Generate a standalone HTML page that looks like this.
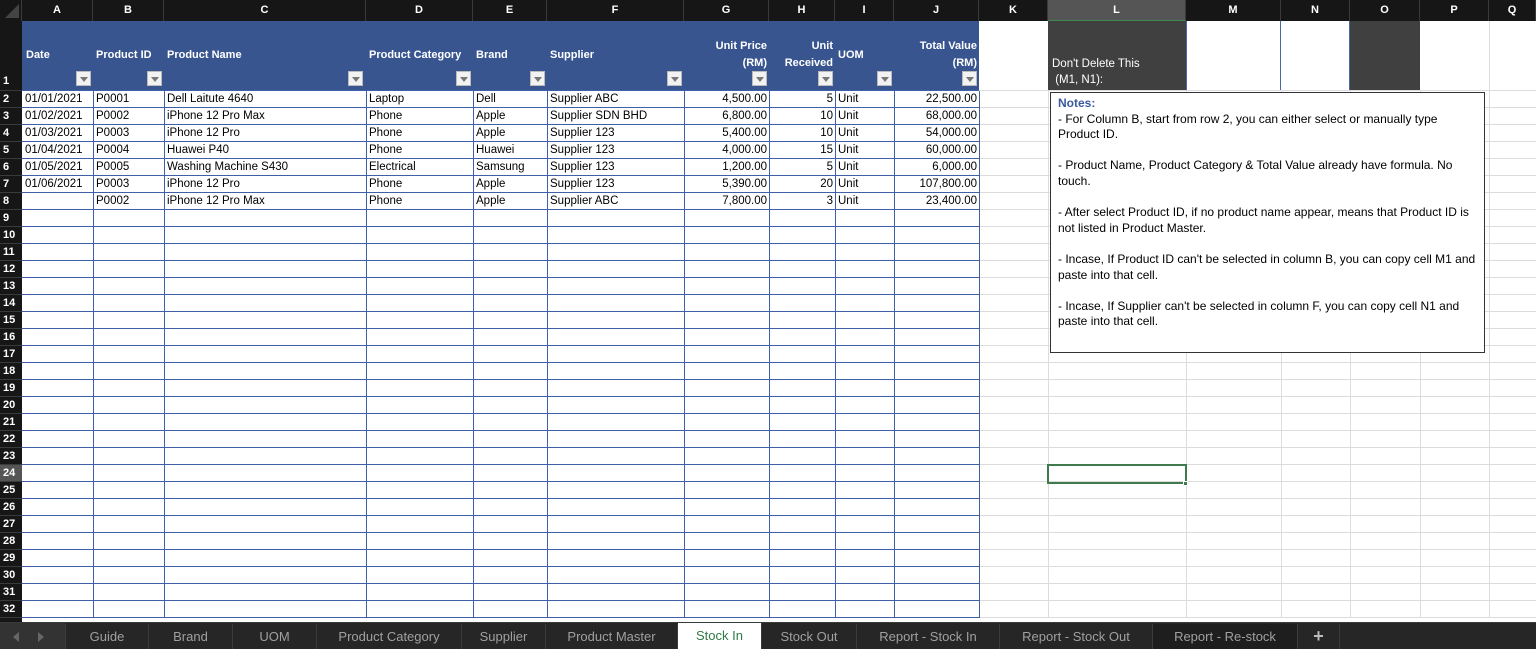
<!DOCTYPE html>
<html><head><meta charset="utf-8"><style>
*{margin:0;padding:0;box-sizing:border-box}
body{width:1536px;height:649px;overflow:hidden;background:#fff;font-family:"Liberation Sans",sans-serif;position:relative}
.a{position:absolute}
.ch{position:absolute;top:0;height:21px;background:#161616;color:#fff;font-weight:bold;font-size:11px;line-height:21px;text-align:center;border-right:1px solid #3a3a3a}
.rh{position:absolute;left:0;width:22px;height:17px;background:#161616;color:#fff;font-weight:bold;font-size:11px;line-height:17px;padding-left:3px;border-bottom:1px solid #3a3a3a}
.vl{position:absolute;top:91px;width:1px;height:527px;background:#3f5fa8}
.vg{position:absolute;top:91px;width:1px;height:527px;background:#dcdcdc}
.hd{position:absolute;color:#fff;font-weight:bold;font-size:11px;line-height:17px}
.dd{position:absolute;top:71px;width:15px;height:15px;background:#f2f2f2;border:1px solid #bbb}
.dd:after{content:"";position:absolute;left:3px;top:5px;border-left:4px solid transparent;border-right:4px solid transparent;border-top:5px solid #777}
.t{position:absolute;font-size:11.5px;line-height:17px;color:#000;white-space:nowrap}
.r{text-align:right}
.tab{position:absolute;top:624px;height:25px;line-height:25px;text-align:center;color:#a0a0a0;font-size:13px;border-right:1px solid #3c3c3c;font-family:"Liberation Sans Narrow","Liberation Sans",sans-serif}
</style></head><body>
<div class="a" style="left:0;top:0;width:1536px;height:21px;background:#161616"></div>
<div class="ch" style="left:0;width:22px"><div style="position:absolute;left:5px;top:4px;border-left:14px solid transparent;border-bottom:14px solid #444"></div></div>
<div class="ch" style="left:22px;width:71px">A</div>
<div class="ch" style="left:93px;width:71px">B</div>
<div class="ch" style="left:164px;width:202px">C</div>
<div class="ch" style="left:366px;width:107px">D</div>
<div class="ch" style="left:473px;width:74px">E</div>
<div class="ch" style="left:547px;width:137px">F</div>
<div class="ch" style="left:684px;width:85px">G</div>
<div class="ch" style="left:769px;width:66px">H</div>
<div class="ch" style="left:835px;width:59px">I</div>
<div class="ch" style="left:894px;width:85px">J</div>
<div class="ch" style="left:979px;width:69px">K</div>
<div class="ch" style="left:1048px;width:138px;background:#555;border-bottom:1px solid #3c8a4e">L</div>
<div class="ch" style="left:1186px;width:95px">M</div>
<div class="ch" style="left:1281px;width:69px">N</div>
<div class="ch" style="left:1350px;width:70px">O</div>
<div class="ch" style="left:1420px;width:69px">P</div>
<div class="ch" style="left:1489px;width:47px">Q</div>

<div class="rh" style="top:21px;height:70px;padding-top:52px">1</div>
<div class="a" style="left:22px;top:21px;width:957px;height:70px;background:#385590"></div>
<div class="a" style="left:1048px;top:21px;width:138px;height:70px;background:#404040"></div>
<div class="a" style="left:1186px;top:21px;width:95px;height:70px;border:1px solid #4a68b0;border-top:none"></div>
<div class="a" style="left:1281px;top:21px;width:69px;height:70px;border:1px solid #4a68b0;border-top:none;border-left:none"></div>
<div class="a" style="left:1350px;top:21px;width:70px;height:70px;background:#404040"></div>
<div class="a" style="left:1489px;top:21px;width:1px;height:70px;background:#dcdcdc"></div>
<div class="hd" style="left:26px;top:47px">Date</div>
<div class="hd" style="left:96px;top:47px">Product ID</div>
<div class="hd" style="left:167px;top:47px">Product Name</div>
<div class="hd" style="left:369px;top:47px">Product Category</div>
<div class="hd" style="left:476px;top:47px">Brand</div>
<div class="hd" style="left:550px;top:47px">Supplier</div>
<div class="hd r" style="left:684px;width:83px;top:38px;line-height:17px">Unit Price<br>(RM)</div>
<div class="hd r" style="left:769px;width:64px;top:38px;line-height:17px">Unit<br>Received</div>
<div class="hd" style="left:838px;top:47px">UOM</div>
<div class="hd r" style="left:894px;width:83px;top:38px;line-height:17px">Total Value<br>(RM)</div>
<div class="t" style="left:1052px;top:56px;color:#fff;font-size:11.5px">Don't Delete This</div>
<div class="t" style="left:1052px;top:72px;color:#fff;font-size:11.5px">&nbsp;(M1, N1):</div>
<div class="dd" style="left:76px"></div>
<div class="dd" style="left:147px"></div>
<div class="dd" style="left:348px"></div>
<div class="dd" style="left:456px"></div>
<div class="dd" style="left:530px"></div>
<div class="dd" style="left:667px"></div>
<div class="dd" style="left:752px"></div>
<div class="dd" style="left:818px"></div>
<div class="dd" style="left:877px"></div>
<div class="dd" style="left:962px"></div>

<div class="a" style="left:22px;top:90px;width:957px;height:528px;background:repeating-linear-gradient(to bottom,#3f5fa8 0 1px,transparent 1px 17px)"></div>
<div class="a" style="left:979px;top:90px;width:557px;height:528px;background:repeating-linear-gradient(to bottom,#dcdcdc 0 1px,transparent 1px 17px)"></div>
<div class="vl" style="left:93px"></div><div class="vl" style="left:164px"></div><div class="vl" style="left:366px"></div><div class="vl" style="left:473px"></div><div class="vl" style="left:547px"></div><div class="vl" style="left:684px"></div><div class="vl" style="left:769px"></div><div class="vl" style="left:835px"></div><div class="vl" style="left:894px"></div><div class="vl" style="left:979px"></div>
<div class="vg" style="left:1048px"></div><div class="vg" style="left:1186px"></div><div class="vg" style="left:1281px"></div><div class="vg" style="left:1350px"></div><div class="vg" style="left:1420px"></div><div class="vg" style="left:1489px"></div>

<div class="rh" style="top:91px">2</div><div class="rh" style="top:108px">3</div><div class="rh" style="top:125px">4</div><div class="rh" style="top:142px">5</div><div class="rh" style="top:159px">6</div><div class="rh" style="top:176px">7</div><div class="rh" style="top:193px">8</div><div class="rh" style="top:210px">9</div><div class="rh" style="top:227px">10</div><div class="rh" style="top:244px">11</div><div class="rh" style="top:261px">12</div><div class="rh" style="top:278px">13</div><div class="rh" style="top:295px">14</div><div class="rh" style="top:312px">15</div><div class="rh" style="top:329px">16</div><div class="rh" style="top:346px">17</div><div class="rh" style="top:363px">18</div><div class="rh" style="top:380px">19</div><div class="rh" style="top:397px">20</div><div class="rh" style="top:414px">21</div><div class="rh" style="top:431px">22</div><div class="rh" style="top:448px">23</div><div class="rh" style="top:465px;background:#555">24</div><div class="rh" style="top:482px">25</div><div class="rh" style="top:499px">26</div><div class="rh" style="top:516px">27</div><div class="rh" style="top:533px">28</div><div class="rh" style="top:550px">29</div><div class="rh" style="top:567px">30</div><div class="rh" style="top:584px">31</div><div class="rh" style="top:601px">32</div>
<div class="a" style="left:0;top:618px;width:22px;height:6px;background:#161616"></div>

<div class="t" style="left:25px;top:91px">01/01/2021</div><div class="t" style="left:96px;top:91px">P0001</div><div class="t" style="left:167px;top:91px">Dell Laitute 4640</div><div class="t" style="left:369px;top:91px">Laptop</div><div class="t" style="left:476px;top:91px">Dell</div><div class="t" style="left:550px;top:91px">Supplier ABC</div><div class="t r" style="left:684px;width:83px;top:91px">4,500.00</div><div class="t r" style="left:769px;width:64px;top:91px">5</div><div class="t" style="left:838px;top:91px">Unit</div><div class="t r" style="left:894px;width:83px;top:91px">22,500.00</div>
<div class="t" style="left:25px;top:108px">01/02/2021</div><div class="t" style="left:96px;top:108px">P0002</div><div class="t" style="left:167px;top:108px">iPhone 12 Pro Max</div><div class="t" style="left:369px;top:108px">Phone</div><div class="t" style="left:476px;top:108px">Apple</div><div class="t" style="left:550px;top:108px">Supplier SDN BHD</div><div class="t r" style="left:684px;width:83px;top:108px">6,800.00</div><div class="t r" style="left:769px;width:64px;top:108px">10</div><div class="t" style="left:838px;top:108px">Unit</div><div class="t r" style="left:894px;width:83px;top:108px">68,000.00</div>
<div class="t" style="left:25px;top:125px">01/03/2021</div><div class="t" style="left:96px;top:125px">P0003</div><div class="t" style="left:167px;top:125px">iPhone 12 Pro</div><div class="t" style="left:369px;top:125px">Phone</div><div class="t" style="left:476px;top:125px">Apple</div><div class="t" style="left:550px;top:125px">Supplier 123</div><div class="t r" style="left:684px;width:83px;top:125px">5,400.00</div><div class="t r" style="left:769px;width:64px;top:125px">10</div><div class="t" style="left:838px;top:125px">Unit</div><div class="t r" style="left:894px;width:83px;top:125px">54,000.00</div>
<div class="t" style="left:25px;top:142px">01/04/2021</div><div class="t" style="left:96px;top:142px">P0004</div><div class="t" style="left:167px;top:142px">Huawei P40</div><div class="t" style="left:369px;top:142px">Phone</div><div class="t" style="left:476px;top:142px">Huawei</div><div class="t" style="left:550px;top:142px">Supplier 123</div><div class="t r" style="left:684px;width:83px;top:142px">4,000.00</div><div class="t r" style="left:769px;width:64px;top:142px">15</div><div class="t" style="left:838px;top:142px">Unit</div><div class="t r" style="left:894px;width:83px;top:142px">60,000.00</div>
<div class="t" style="left:25px;top:159px">01/05/2021</div><div class="t" style="left:96px;top:159px">P0005</div><div class="t" style="left:167px;top:159px">Washing Machine S430</div><div class="t" style="left:369px;top:159px">Electrical</div><div class="t" style="left:476px;top:159px">Samsung</div><div class="t" style="left:550px;top:159px">Supplier 123</div><div class="t r" style="left:684px;width:83px;top:159px">1,200.00</div><div class="t r" style="left:769px;width:64px;top:159px">5</div><div class="t" style="left:838px;top:159px">Unit</div><div class="t r" style="left:894px;width:83px;top:159px">6,000.00</div>
<div class="t" style="left:25px;top:176px">01/06/2021</div><div class="t" style="left:96px;top:176px">P0003</div><div class="t" style="left:167px;top:176px">iPhone 12 Pro</div><div class="t" style="left:369px;top:176px">Phone</div><div class="t" style="left:476px;top:176px">Apple</div><div class="t" style="left:550px;top:176px">Supplier 123</div><div class="t r" style="left:684px;width:83px;top:176px">5,390.00</div><div class="t r" style="left:769px;width:64px;top:176px">20</div><div class="t" style="left:838px;top:176px">Unit</div><div class="t r" style="left:894px;width:83px;top:176px">107,800.00</div>
<div class="t" style="left:96px;top:193px">P0002</div><div class="t" style="left:167px;top:193px">iPhone 12 Pro Max</div><div class="t" style="left:369px;top:193px">Phone</div><div class="t" style="left:476px;top:193px">Apple</div><div class="t" style="left:550px;top:193px">Supplier ABC</div><div class="t r" style="left:684px;width:83px;top:193px">7,800.00</div><div class="t r" style="left:769px;width:64px;top:193px">3</div><div class="t" style="left:838px;top:193px">Unit</div><div class="t r" style="left:894px;width:83px;top:193px">23,400.00</div>

<div class="a" style="left:1050px;top:92px;width:435px;height:261px;background:#fff;border:1px solid #333;padding:3px 6px 3px 7px;font-size:12px;line-height:15.6px;color:#000">
<b style="color:#3a5a9c">Notes:</b><br>- For Column B, start from row 2, you can either select or manually type Product ID.<br><br>- Product Name, Product Category &amp; Total Value already have formula. No touch.<br><br>- After select Product ID, if no product name appear, means that Product ID is not listed in Product Master.<br><br>- Incase, If Product ID can't be selected in column B, you can copy cell M1 and paste into that cell.<br><br>- Incase, If Supplier can't be selected in column F, you can copy cell N1 and paste into that cell.
</div>

<div class="a" style="left:1047px;top:464px;width:140px;height:20px;border:2px solid #3f7a4c"></div>
<div class="a" style="left:1183px;top:481px;width:5px;height:5px;background:#3f7a4c;border:1px solid #fff"></div>

<div class="a" style="left:0;top:622px;width:1536px;height:27px;background:#262626;border-top:1px solid #3a3a3a"></div>
<div class="a" style="left:0;top:623px;width:65px;height:26px;background:#333"></div>
<div class="a" style="left:13px;top:632px;border-right:6px solid #666;border-top:5px solid transparent;border-bottom:5px solid transparent"></div>
<div class="a" style="left:38px;top:632px;border-left:6px solid #666;border-top:5px solid transparent;border-bottom:5px solid transparent"></div>
<div class="tab" style="left:65px;width:84px;border-left:1px solid #3c3c3c">Guide</div>
<div class="tab" style="left:149px;width:84px">Brand</div>
<div class="tab" style="left:233px;width:84px">UOM</div>
<div class="tab" style="left:317px;width:145px">Product Category</div>
<div class="tab" style="left:462px;width:84px">Supplier</div>
<div class="tab" style="left:546px;width:132px">Product Master</div>
<div class="tab" style="left:678px;width:84px;background:#fff;color:#2f7a45;top:623px;height:26px">Stock In</div>
<div class="tab" style="left:762px;width:95px">Stock Out</div>
<div class="tab" style="left:857px;width:143px">Report - Stock In</div>
<div class="tab" style="left:1000px;width:153px">Report - Stock Out</div>
<div class="tab" style="left:1153px;width:145px;background:#1e1e1e">Report - Re-stock</div>
<div class="tab" style="left:1298px;width:42px;font-size:18px;font-weight:bold;color:#bbb">+</div>
</body></html>
